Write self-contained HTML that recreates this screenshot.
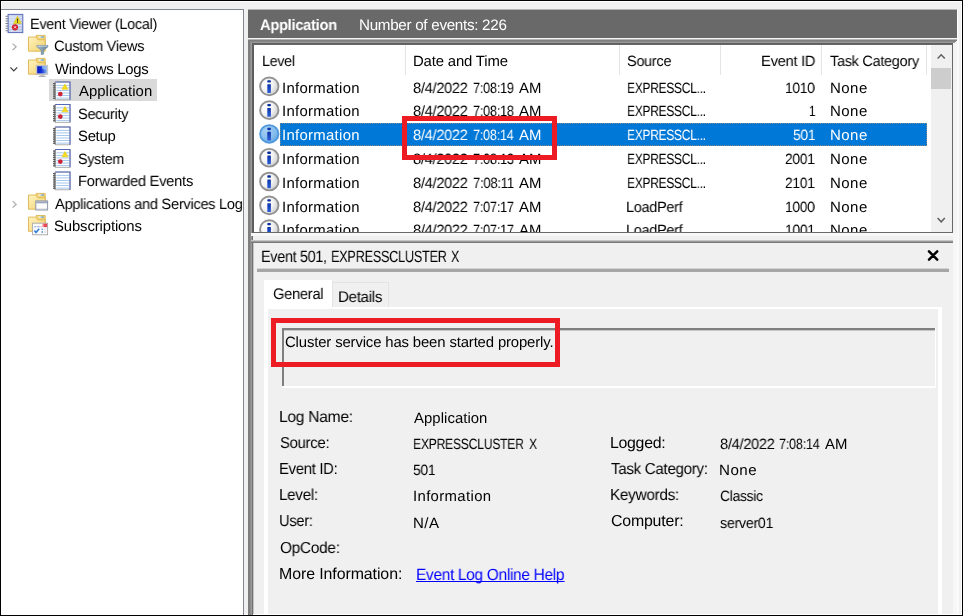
<!DOCTYPE html>
<html lang="en">
<head>
<meta charset="utf-8">
<title>Event Viewer</title>
<style>
html,body{margin:0;padding:0;}
body{width:963px;height:616px;overflow:hidden;background:#f0f0f0;position:relative;
 font-family:"Liberation Sans",sans-serif;font-size:14.5px;color:#000;}
.a{position:absolute;}
.t{will-change:transform;text-rendering:geometricPrecision;position:absolute;white-space:pre;line-height:20px;height:20px;font-size:14.9px;transform-origin:0 50%;}
.clip{position:absolute;left:0;top:0;width:963px;height:616px;}
svg{position:absolute;overflow:visible;}
</style>
</head>
<body>
<!-- ===== left tree pane ===== -->
<div class="a" style="left:1px;top:9px;width:243px;height:606px;background:#fff;"></div>
<div class="a" style="left:1px;top:9px;width:243px;height:1px;background:#828790;"></div>
<div class="a" style="left:243px;top:9px;width:1px;height:606px;background:#828790;"></div>
<!-- selected node -->
<div class="a" style="left:49px;top:79px;width:108px;height:22px;background:#d9d9d9;"></div>
<div class="clip" style="clip-path:inset(10px 720px 1px 1px);">
<svg width="0" height="0" style="position:absolute"><defs>
<linearGradient id="gFold" x1="0" y1="0" x2="1" y2="1"><stop offset="0" stop-color="#fff3bf"/><stop offset="1" stop-color="#f2d270"/></linearGradient>
<linearGradient id="gTab" x1="0" y1="0" x2="0" y2="1"><stop offset="0" stop-color="#f7dc86"/><stop offset="1" stop-color="#e9c25a"/></linearGradient>
<linearGradient id="gLbl" x1="0" y1="0" x2="1" y2="0"><stop offset="0" stop-color="#ffffff"/><stop offset="1" stop-color="#3c8cd8"/></linearGradient>
<linearGradient id="gScr" x1="0" y1="0" x2="1" y2="0"><stop offset="0" stop-color="#0418c4"/><stop offset="0.45" stop-color="#1434d8"/><stop offset="1" stop-color="#86b4f0"/></linearGradient>
<linearGradient id="gFun" x1="0" y1="0" x2="1" y2="0"><stop offset="0" stop-color="#a9bccb"/><stop offset="1" stop-color="#5f7f99"/></linearGradient>
<radialGradient id="gInfo" cx="0.28" cy="0.35" r="0.85"><stop offset="0" stop-color="#ffffff"/><stop offset="0.5" stop-color="#f2f2f2"/><stop offset="1" stop-color="#c2c2c2"/></radialGradient>
<radialGradient id="gInfoS" cx="0.35" cy="0.3" r="0.8"><stop offset="0" stop-color="#a8d0f4"/><stop offset="0.6" stop-color="#84bcee"/><stop offset="1" stop-color="#5ea2e2"/></radialGradient>
<linearGradient id="gI" x1="0" y1="0" x2="0" y2="1"><stop offset="0" stop-color="#0c35a8"/><stop offset="1" stop-color="#2f5fd8"/></linearGradient>
<linearGradient id="gBook" x1="0" y1="0" x2="1" y2="1"><stop offset="0" stop-color="#d4def4"/><stop offset="1" stop-color="#a9bbe2"/></linearGradient>
</defs></svg>
<svg class="a" style="left:5px;top:14px;" width="20" height="20" viewBox="0 0 20 20" ><rect x="3.1" y="0.4" width="14.7" height="18.2" fill="url(#gBook)" stroke="#5b6cb6" stroke-width="1"/><rect x="4.4" y="2.60" width="12.4" height="1.2" fill="#e2eaf8" opacity="0.9"/><rect x="4.4" y="5.35" width="12.4" height="1.2" fill="#e2eaf8" opacity="0.9"/><rect x="4.4" y="8.10" width="12.4" height="1.2" fill="#e2eaf8" opacity="0.9"/><rect x="4.4" y="10.85" width="12.4" height="1.2" fill="#e2eaf8" opacity="0.9"/><rect x="4.4" y="13.60" width="12.4" height="1.2" fill="#e2eaf8" opacity="0.9"/><rect x="4.4" y="16.35" width="12.4" height="1.2" fill="#e2eaf8" opacity="0.9"/><rect x="0.4" y="1.80" width="3" height="1" rx="0.5" fill="#7a7f8c"/><rect x="0.4" y="4.20" width="3" height="1" rx="0.5" fill="#7a7f8c"/><rect x="0.4" y="6.60" width="3" height="1" rx="0.5" fill="#7a7f8c"/><rect x="0.4" y="9.00" width="3" height="1" rx="0.5" fill="#7a7f8c"/><rect x="0.4" y="11.40" width="3" height="1" rx="0.5" fill="#7a7f8c"/><rect x="0.4" y="13.80" width="3" height="1" rx="0.5" fill="#7a7f8c"/><rect x="0.4" y="16.20" width="3" height="1" rx="0.5" fill="#7a7f8c"/><path d="M12.5 2.2 L16.2 9.5 H8.6 Z" fill="#ecd51c" stroke="#d9c214" stroke-width="0.6" stroke-linejoin="round"/><rect x="12.05" y="4.6" width="0.9" height="3" fill="#222"/><rect x="12.05" y="8" width="0.9" height="0.8" fill="#222"/><circle cx="10" cy="13.3" r="3.1" fill="#d2202e"/><path d="M8.9 12.2 L11.1 14.4 M11.1 12.2 L8.9 14.4" stroke="#ffe9ea" stroke-width="0.9"/></svg>
<svg class="a" style="left:28px;top:34px;" width="22" height="22" viewBox="0 0 22 22" ><g transform="translate(0.0,0.8)"><path d="M8.2 0.6 H17.2 V12 H8.2 Z" fill="url(#gTab)" stroke="#d7b04a" stroke-width="0.8"/><rect x="11" y="1.5" width="4.6" height="1.5" fill="url(#gLbl)"/><path d="M0.5 2.2 H7.4 Q8.4 2.2 8.9 3.6 Q9.4 5 10.6 5 H17.2 V16.4 H0.5 Z" fill="url(#gFold)" stroke="#dcb650" stroke-width="0.9"/><path d="M8.8 10.6 H20 V12 L15.6 15.4 V19.4 L13.2 19.8 V15.4 L8.8 12 Z" fill="url(#gFun)" stroke="#6a869c" stroke-width="0.6"/><rect x="9.4" y="10.9" width="10" height="1" fill="#c5d3de"/></g></svg>
<svg class="a" style="left:28px;top:57px;" width="22" height="22" viewBox="0 0 22 22" ><g transform="translate(0.0,0.8)"><path d="M8.2 0.6 H17.2 V12 H8.2 Z" fill="url(#gTab)" stroke="#d7b04a" stroke-width="0.8"/><rect x="11" y="1.5" width="4.6" height="1.5" fill="url(#gLbl)"/><path d="M0.5 2.2 H7.4 Q8.4 2.2 8.9 3.6 Q9.4 5 10.6 5 H17.2 V16.4 H0.5 Z" fill="url(#gFold)" stroke="#dcb650" stroke-width="0.9"/><rect x="8.2" y="7.4" width="11.6" height="9.2" fill="#d6d6d6" stroke="#b4b4b4" stroke-width="0.6"/><rect x="9.2" y="8.4" width="9.6" height="7.2" fill="url(#gScr)"/><path d="M14 8.4 H18.8 V12 Q16 12.2 14 10.6 Z" fill="#9cc4f4" opacity="0.75"/><rect x="12.4" y="16.8" width="3.4" height="1.2" fill="#bdbdbd"/><rect x="10.6" y="18" width="7" height="1.1" fill="#a8a8a8"/></g></svg>
<svg class="a" style="left:53px;top:81px;" width="19" height="20" viewBox="0 0 19 20" ><g transform="translate(0.0,0.5)"><rect x="2.2" y="0.5" width="14.8" height="17.8" fill="#ffffff" stroke="#9a9a9a" stroke-width="0.8"/><path d="M2.2 0.5 H17 V18.3" fill="none" stroke="#5669b8" stroke-width="1.1"/><rect x="3.4" y="3.40" width="12.6" height="0.9" fill="#9cc2ea"/><rect x="3.4" y="5.95" width="12.6" height="0.9" fill="#9cc2ea"/><rect x="3.4" y="8.50" width="12.6" height="0.9" fill="#9cc2ea"/><rect x="3.4" y="11.05" width="12.6" height="0.9" fill="#9cc2ea"/><rect x="3.4" y="13.60" width="12.6" height="0.9" fill="#9cc2ea"/><rect x="3.4" y="16.15" width="12.6" height="0.9" fill="#9cc2ea"/><rect x="0.9" y="1.2" width="1.5" height="16.4" fill="#8a8a8a"/><rect x="0" y="1.50" width="2.5" height="1.2" fill="#5e5e5e"/><rect x="0" y="3.60" width="2.5" height="1.2" fill="#5e5e5e"/><rect x="0" y="5.70" width="2.5" height="1.2" fill="#5e5e5e"/><rect x="0" y="7.80" width="2.5" height="1.2" fill="#5e5e5e"/><rect x="0" y="9.90" width="2.5" height="1.2" fill="#5e5e5e"/><rect x="0" y="12.00" width="2.5" height="1.2" fill="#5e5e5e"/><rect x="0" y="14.10" width="2.5" height="1.2" fill="#5e5e5e"/><rect x="0" y="16.20" width="2.5" height="1.2" fill="#5e5e5e"/><path d="M12 2.6 L15 7.8 H9 Z" fill="#f4dc1c" stroke="#e6c81a" stroke-width="0.6" stroke-linejoin="round"/><circle cx="7.3" cy="12.6" r="2.35" fill="#cf2337"/></g></svg>
<svg class="a" style="left:53px;top:104px;" width="19" height="20" viewBox="0 0 19 20" ><rect x="2.2" y="0.5" width="14.8" height="17.8" fill="#ffffff" stroke="#9a9a9a" stroke-width="0.8"/><path d="M2.2 0.5 H17 V18.3" fill="none" stroke="#5669b8" stroke-width="1.1"/><rect x="3.4" y="3.40" width="12.6" height="0.9" fill="#9cc2ea"/><rect x="3.4" y="5.95" width="12.6" height="0.9" fill="#9cc2ea"/><rect x="3.4" y="8.50" width="12.6" height="0.9" fill="#9cc2ea"/><rect x="3.4" y="11.05" width="12.6" height="0.9" fill="#9cc2ea"/><rect x="3.4" y="13.60" width="12.6" height="0.9" fill="#9cc2ea"/><rect x="3.4" y="16.15" width="12.6" height="0.9" fill="#9cc2ea"/><rect x="0.9" y="1.2" width="1.5" height="16.4" fill="#8a8a8a"/><rect x="0" y="1.50" width="2.5" height="1.2" fill="#5e5e5e"/><rect x="0" y="3.60" width="2.5" height="1.2" fill="#5e5e5e"/><rect x="0" y="5.70" width="2.5" height="1.2" fill="#5e5e5e"/><rect x="0" y="7.80" width="2.5" height="1.2" fill="#5e5e5e"/><rect x="0" y="9.90" width="2.5" height="1.2" fill="#5e5e5e"/><rect x="0" y="12.00" width="2.5" height="1.2" fill="#5e5e5e"/><rect x="0" y="14.10" width="2.5" height="1.2" fill="#5e5e5e"/><rect x="0" y="16.20" width="2.5" height="1.2" fill="#5e5e5e"/><path d="M12 2.6 L15 7.8 H9 Z" fill="#f4dc1c" stroke="#e6c81a" stroke-width="0.6" stroke-linejoin="round"/><circle cx="7.3" cy="12.6" r="2.35" fill="#cf2337"/></svg>
<svg class="a" style="left:53px;top:126px;" width="19" height="20" viewBox="0 0 19 20" ><g transform="translate(0.0,0.5)"><rect x="2.2" y="0.5" width="14.8" height="17.8" fill="#ffffff" stroke="#9a9a9a" stroke-width="0.8"/><path d="M2.2 0.5 H17 V18.3" fill="none" stroke="#5669b8" stroke-width="1.1"/><rect x="3.4" y="3.40" width="12.6" height="0.9" fill="#9cc2ea"/><rect x="3.4" y="5.95" width="12.6" height="0.9" fill="#9cc2ea"/><rect x="3.4" y="8.50" width="12.6" height="0.9" fill="#9cc2ea"/><rect x="3.4" y="11.05" width="12.6" height="0.9" fill="#9cc2ea"/><rect x="3.4" y="13.60" width="12.6" height="0.9" fill="#9cc2ea"/><rect x="3.4" y="16.15" width="12.6" height="0.9" fill="#9cc2ea"/><rect x="0.9" y="1.2" width="1.5" height="16.4" fill="#8a8a8a"/><rect x="0" y="1.50" width="2.5" height="1.2" fill="#5e5e5e"/><rect x="0" y="3.60" width="2.5" height="1.2" fill="#5e5e5e"/><rect x="0" y="5.70" width="2.5" height="1.2" fill="#5e5e5e"/><rect x="0" y="7.80" width="2.5" height="1.2" fill="#5e5e5e"/><rect x="0" y="9.90" width="2.5" height="1.2" fill="#5e5e5e"/><rect x="0" y="12.00" width="2.5" height="1.2" fill="#5e5e5e"/><rect x="0" y="14.10" width="2.5" height="1.2" fill="#5e5e5e"/><rect x="0" y="16.20" width="2.5" height="1.2" fill="#5e5e5e"/></g></svg>
<svg class="a" style="left:53px;top:149px;" width="19" height="20" viewBox="0 0 19 20" ><rect x="2.2" y="0.5" width="14.8" height="17.8" fill="#ffffff" stroke="#9a9a9a" stroke-width="0.8"/><path d="M2.2 0.5 H17 V18.3" fill="none" stroke="#5669b8" stroke-width="1.1"/><rect x="3.4" y="3.40" width="12.6" height="0.9" fill="#9cc2ea"/><rect x="3.4" y="5.95" width="12.6" height="0.9" fill="#9cc2ea"/><rect x="3.4" y="8.50" width="12.6" height="0.9" fill="#9cc2ea"/><rect x="3.4" y="11.05" width="12.6" height="0.9" fill="#9cc2ea"/><rect x="3.4" y="13.60" width="12.6" height="0.9" fill="#9cc2ea"/><rect x="3.4" y="16.15" width="12.6" height="0.9" fill="#9cc2ea"/><rect x="0.9" y="1.2" width="1.5" height="16.4" fill="#8a8a8a"/><rect x="0" y="1.50" width="2.5" height="1.2" fill="#5e5e5e"/><rect x="0" y="3.60" width="2.5" height="1.2" fill="#5e5e5e"/><rect x="0" y="5.70" width="2.5" height="1.2" fill="#5e5e5e"/><rect x="0" y="7.80" width="2.5" height="1.2" fill="#5e5e5e"/><rect x="0" y="9.90" width="2.5" height="1.2" fill="#5e5e5e"/><rect x="0" y="12.00" width="2.5" height="1.2" fill="#5e5e5e"/><rect x="0" y="14.10" width="2.5" height="1.2" fill="#5e5e5e"/><rect x="0" y="16.20" width="2.5" height="1.2" fill="#5e5e5e"/><path d="M12 2.6 L15 7.8 H9 Z" fill="#f4dc1c" stroke="#e6c81a" stroke-width="0.6" stroke-linejoin="round"/><circle cx="7.3" cy="12.6" r="2.35" fill="#cf2337"/></svg>
<svg class="a" style="left:53px;top:171px;" width="19" height="20" viewBox="0 0 19 20" ><g transform="translate(0.0,0.5)"><rect x="2.2" y="0.5" width="14.8" height="17.8" fill="#ffffff" stroke="#9a9a9a" stroke-width="0.8"/><path d="M2.2 0.5 H17 V18.3" fill="none" stroke="#5669b8" stroke-width="1.1"/><rect x="3.4" y="3.40" width="12.6" height="0.9" fill="#9cc2ea"/><rect x="3.4" y="5.95" width="12.6" height="0.9" fill="#9cc2ea"/><rect x="3.4" y="8.50" width="12.6" height="0.9" fill="#9cc2ea"/><rect x="3.4" y="11.05" width="12.6" height="0.9" fill="#9cc2ea"/><rect x="3.4" y="13.60" width="12.6" height="0.9" fill="#9cc2ea"/><rect x="3.4" y="16.15" width="12.6" height="0.9" fill="#9cc2ea"/><rect x="0.9" y="1.2" width="1.5" height="16.4" fill="#8a8a8a"/><rect x="0" y="1.50" width="2.5" height="1.2" fill="#5e5e5e"/><rect x="0" y="3.60" width="2.5" height="1.2" fill="#5e5e5e"/><rect x="0" y="5.70" width="2.5" height="1.2" fill="#5e5e5e"/><rect x="0" y="7.80" width="2.5" height="1.2" fill="#5e5e5e"/><rect x="0" y="9.90" width="2.5" height="1.2" fill="#5e5e5e"/><rect x="0" y="12.00" width="2.5" height="1.2" fill="#5e5e5e"/><rect x="0" y="14.10" width="2.5" height="1.2" fill="#5e5e5e"/><rect x="0" y="16.20" width="2.5" height="1.2" fill="#5e5e5e"/></g></svg>
<svg class="a" style="left:28px;top:192px;" width="22" height="22" viewBox="0 0 22 22" ><g transform="translate(0.0,0.8)"><path d="M8.2 0.6 H17.2 V12 H8.2 Z" fill="url(#gTab)" stroke="#d7b04a" stroke-width="0.8"/><rect x="11" y="1.5" width="4.6" height="1.5" fill="url(#gLbl)"/><path d="M0.5 2.2 H7.4 Q8.4 2.2 8.9 3.6 Q9.4 5 10.6 5 H17.2 V16.4 H0.5 Z" fill="url(#gFold)" stroke="#dcb650" stroke-width="0.9"/><rect x="7.8" y="8.1" width="11.8" height="9.1" fill="#fbfbfb" stroke="#8c94a8" stroke-width="1"/><rect x="8.3" y="8.6" width="10.8" height="1.9" fill="#9aa4ba"/><rect x="8.3" y="15.9" width="10.8" height="0.9" fill="#b5bccb"/></g></svg>
<svg class="a" style="left:28px;top:214px;" width="22" height="22" viewBox="0 0 22 22" ><g transform="translate(0.0,0.9)"><path d="M8.2 0.6 H17.2 V12 H8.2 Z" fill="url(#gTab)" stroke="#d7b04a" stroke-width="0.8"/><rect x="11" y="1.5" width="4.6" height="1.5" fill="url(#gLbl)"/><path d="M0.5 2.2 H7.4 Q8.4 2.2 8.9 3.6 Q9.4 5 10.6 5 H17.2 V16.4 H0.5 Z" fill="url(#gFold)" stroke="#dcb650" stroke-width="0.9"/><rect x="4.6" y="8.3" width="15" height="11.6" fill="#fdfdfd" stroke="#a6a6a6" stroke-width="0.9"/><rect x="15.2" y="8.8" width="3.9" height="3.4" fill="#ea4555"/><rect x="14.2" y="8.8" width="1.2" height="3.4" fill="#f4a3ab"/><rect x="6.2" y="11.3" width="2.2" height="1.1" fill="#7fb0e6"/><rect x="9.2" y="11.3" width="2.4" height="1.1" fill="#9aa8d8"/><rect x="12.2" y="11.3" width="1.4" height="1.1" fill="#c9b4d4"/><path d="M6.4 15.6 L8 17.6 L11.2 13.8" fill="none" stroke="#2d7fd6" stroke-width="1.5"/><rect x="13.6" y="13.6" width="1.2" height="1.4" fill="#3a7fd8"/><rect x="13.6" y="16.2" width="1.2" height="1.8" fill="#3a7fd8"/><rect x="16.4" y="13.6" width="1.2" height="1.4" fill="#c9cfe0"/><rect x="16.4" y="16.2" width="1.2" height="1.8" fill="#c9cfe0"/></g></svg>
<svg class="a" style="left:10px;top:41px;" width="9" height="11" viewBox="0 0 9 11" ><g transform="translate(0.4,0.8)"><path d="M2.2 1.8 L5.8 5 L2.2 8.2" fill="none" stroke="#a6a6a6" stroke-width="1.1"/></g></svg>
<svg class="a" style="left:8px;top:65px;" width="11" height="9" viewBox="0 0 11 9" ><g transform="translate(0.8,0.2)"><path d="M1.6 2.2 L5 5.7 L8.4 2.2" fill="none" stroke="#404040" stroke-width="1.25"/></g></svg>
<svg class="a" style="left:10px;top:199px;" width="9" height="11" viewBox="0 0 9 11" ><g transform="translate(0.4,0.4)"><path d="M2.2 1.8 L5.8 5 L2.2 8.2" fill="none" stroke="#a6a6a6" stroke-width="1.1"/></g></svg>
<span class="t" style="left:30.47px;top:15px;letter-spacing:-0.300px;transform:scaleX(0.9686);">Event Viewer (Local)</span>
<span class="t" style="left:54.21px;top:37px;letter-spacing:-0.300px;transform:scaleX(0.9869);">Custom Views</span>
<span class="t" style="left:54.90px;top:60px;letter-spacing:-0.284px;">Windows Logs</span>
<span class="t" style="left:78.90px;top:82px;letter-spacing:0.034px;">Application</span>
<span class="t" style="left:78.45px;top:105px;letter-spacing:-0.300px;transform:scaleX(0.9755);">Security</span>
<span class="t" style="left:78.44px;top:127px;letter-spacing:-0.300px;transform:scaleX(0.9954);">Setup</span>
<span class="t" style="left:78.45px;top:150px;letter-spacing:-0.300px;transform:scaleX(0.9608);">System</span>
<span class="t" style="left:77.75px;top:172px;letter-spacing:-0.300px;transform:scaleX(0.9906);">Forwarded Events</span>
<span class="t" style="left:54.90px;top:195px;letter-spacing:-0.300px;transform:scaleX(0.9833);">Applications and Services Logs</span>
<span class="t" style="left:54.43px;top:217px;letter-spacing:-0.126px;">Subscriptions</span>
</div>

<!-- ===== right: header band ===== -->
<div class="a" style="left:248px;top:9px;width:709px;height:1px;background:#b4b4b4;"></div>
<div class="a" style="left:248px;top:10px;width:709px;height:28px;background:#696969;"></div>
<div class="a" style="left:957px;top:10px;width:1px;height:28px;background:#fff;"></div>

<!-- vertical gray strip left of list/detail -->
<div class="a" style="left:248px;top:40px;width:2px;height:575px;background:#7e7e7e;"></div>
<div class="a" style="left:250px;top:40px;width:1px;height:575px;background:#8c8c8c;"></div>
<div class="a" style="left:251px;top:41px;width:1px;height:574px;background:#9c9c9c;"></div>
<div class="a" style="left:252px;top:42px;width:1px;height:573px;background:#707070;"></div>
<div class="a" style="left:253px;top:243px;width:1px;height:372px;background:#c4c4c4;"></div>
<!-- list frame -->
<div class="a" style="left:248px;top:38px;width:709px;height:1px;background:#f6f6f6;"></div>
<div class="a" style="left:248px;top:39px;width:709px;height:1px;background:#b4b4b4;"></div>
<div class="a" style="left:248px;top:40px;width:709px;height:1px;background:#7e7e7e;"></div>
<div class="a" style="left:250px;top:41px;width:706px;height:1px;background:#868686;"></div>
<div class="a" style="left:251px;top:42px;width:704px;height:1px;background:#989898;"></div>
<div class="a" style="left:252px;top:43px;width:701px;height:190px;background:#5e5e5e;"></div>
<div class="a" style="left:253px;top:44px;width:700px;height:1px;background:#686868;"></div>
<div class="a" style="left:953px;top:43px;width:4px;height:190px;background:#f4f4f4;"></div>
<div class="a" style="left:952px;top:44px;width:1px;height:189px;background:#696969;"></div>
<div class="a" style="left:254px;top:232px;width:699px;height:1px;background:#696969;"></div>
<div class="a" style="left:254px;top:45px;width:698px;height:187px;background:#fff;"></div>
<!-- list column separators -->
<div class="a" style="left:405px;top:45px;width:1px;height:30px;background:#e5e5e5;"></div>
<div class="a" style="left:619px;top:45px;width:1px;height:30px;background:#e5e5e5;"></div>
<div class="a" style="left:720px;top:45px;width:1px;height:30px;background:#e5e5e5;"></div>
<div class="a" style="left:821px;top:45px;width:1px;height:30px;background:#e5e5e5;"></div>
<div class="a" style="left:926px;top:45px;width:1px;height:30px;background:#e5e5e5;"></div>
<!-- selected row -->
<div class="a" style="left:279.5px;top:123px;width:647.5px;height:23px;background:#0078d7;box-sizing:border-box;border:1px dotted rgba(230,150,70,0.55);"></div>
<!-- scrollbar -->
<div class="a" style="left:931px;top:45px;width:21px;height:187px;background:#f0f0f0;"></div>
<div class="a" style="left:931px;top:68px;width:20px;height:21px;background:#cdcdcd;"></div>
<svg class="a" style="left:936px;top:52px;" width="11" height="9" viewBox="0 0 11 9" ><g transform="translate(0.2,0.5)"><path d="M1.4 6 L5 2.3 L8.6 6" fill="none" stroke="#606060" stroke-width="1.5"/></g></svg><svg class="a" style="left:936px;top:216px;" width="11" height="9" viewBox="0 0 11 9" ><g transform="translate(0.2,0.1)"><path d="M1.4 2 L5 5.7 L8.6 2" fill="none" stroke="#606060" stroke-width="1.5"/></g></svg>
<div class="clip" style="clip-path:inset(45px 32px 384px 254px);">
<svg class="a" style="left:259px;top:76px;" width="21" height="21" viewBox="0 0 21 21" ><g transform="translate(0.3,0.35)"><ellipse cx="10" cy="10" rx="9.2" ry="8.85" fill="url(#gInfo)" stroke="#929292" stroke-width="1.9"/><rect x="8.0" y="7.85" width="3.6" height="8.75" rx="0.5" fill="url(#gI)"/><rect x="8.0" y="3.8" width="3.6" height="2.4" rx="0.8" fill="#0a2f9c"/></g></svg>
<svg class="a" style="left:259px;top:100px;" width="21" height="21" viewBox="0 0 21 21" ><g transform="translate(0.3,0.15)"><ellipse cx="10" cy="10" rx="9.2" ry="8.85" fill="url(#gInfo)" stroke="#929292" stroke-width="1.9"/><rect x="8.0" y="7.85" width="3.6" height="8.75" rx="0.5" fill="url(#gI)"/><rect x="8.0" y="3.8" width="3.6" height="2.4" rx="0.8" fill="#0a2f9c"/></g></svg>
<svg class="a" style="left:259px;top:123px;" width="21" height="21" viewBox="0 0 21 21" ><g transform="translate(0.3,0.95)"><ellipse cx="10" cy="10" rx="9.2" ry="8.85" fill="url(#gInfoS)" stroke="#4f98dc" stroke-width="1.8"/><rect x="8.0" y="7.85" width="3.6" height="8.75" rx="0.5" fill="url(#gI)"/><rect x="8.0" y="3.8" width="3.6" height="2.4" rx="0.8" fill="#0c3aa8"/></g></svg>
<svg class="a" style="left:259px;top:147px;" width="21" height="21" viewBox="0 0 21 21" ><g transform="translate(0.3,0.75)"><ellipse cx="10" cy="10" rx="9.2" ry="8.85" fill="url(#gInfo)" stroke="#929292" stroke-width="1.9"/><rect x="8.0" y="7.85" width="3.6" height="8.75" rx="0.5" fill="url(#gI)"/><rect x="8.0" y="3.8" width="3.6" height="2.4" rx="0.8" fill="#0a2f9c"/></g></svg>
<svg class="a" style="left:259px;top:171px;" width="21" height="21" viewBox="0 0 21 21" ><g transform="translate(0.3,0.55)"><ellipse cx="10" cy="10" rx="9.2" ry="8.85" fill="url(#gInfo)" stroke="#929292" stroke-width="1.9"/><rect x="8.0" y="7.85" width="3.6" height="8.75" rx="0.5" fill="url(#gI)"/><rect x="8.0" y="3.8" width="3.6" height="2.4" rx="0.8" fill="#0a2f9c"/></g></svg>
<svg class="a" style="left:259px;top:195px;" width="21" height="21" viewBox="0 0 21 21" ><g transform="translate(0.3,0.35)"><ellipse cx="10" cy="10" rx="9.2" ry="8.85" fill="url(#gInfo)" stroke="#929292" stroke-width="1.9"/><rect x="8.0" y="7.85" width="3.6" height="8.75" rx="0.5" fill="url(#gI)"/><rect x="8.0" y="3.8" width="3.6" height="2.4" rx="0.8" fill="#0a2f9c"/></g></svg>
<svg class="a" style="left:259px;top:219px;" width="21" height="21" viewBox="0 0 21 21" ><g transform="translate(0.3,0.15)"><ellipse cx="10" cy="10" rx="9.2" ry="8.85" fill="url(#gInfo)" stroke="#929292" stroke-width="1.9"/><rect x="8.0" y="7.85" width="3.6" height="8.75" rx="0.5" fill="url(#gI)"/><rect x="8.0" y="3.8" width="3.6" height="2.4" rx="0.8" fill="#0a2f9c"/></g></svg>
<span class="t" style="left:282.14px;top:79px;letter-spacing:0.306px;">Information</span>
<span class="t" style="left:413.44px;top:79px;letter-spacing:-0.300px;transform:scaleX(0.9849);">8/4/2022</span>
<span class="t" style="left:473.10px;top:79px;letter-spacing:-0.300px;transform:scaleX(0.8582);">7:08:19</span>
<span class="t" style="left:518.80px;top:79px;letter-spacing:-0.046px;">AM</span>
<span class="t" style="left:626.57px;top:79px;letter-spacing:-0.300px;transform:scaleX(0.8027);">EXPRESSCL...</span>
<span class="t" style="left:785.24px;top:79px;letter-spacing:-0.300px;transform:scaleX(0.9242);">1010</span>
<span class="t" style="left:829.53px;top:79px;letter-spacing:0.450px;transform:scaleX(1.0085);">None</span>
<span class="t" style="left:282.14px;top:102px;letter-spacing:0.306px;">Information</span>
<span class="t" style="left:413.44px;top:102px;letter-spacing:-0.300px;transform:scaleX(0.9849);">8/4/2022</span>
<span class="t" style="left:473.10px;top:102px;letter-spacing:-0.300px;transform:scaleX(0.8582);">7:08:18</span>
<span class="t" style="left:518.80px;top:102px;letter-spacing:-0.046px;">AM</span>
<span class="t" style="left:626.57px;top:102px;letter-spacing:-0.300px;transform:scaleX(0.8027);">EXPRESSCL...</span>
<span class="t" style="left:808.56px;top:102px;letter-spacing:0.000px;transform:scaleX(0.7998);">1</span>
<span class="t" style="left:829.53px;top:102px;letter-spacing:0.450px;transform:scaleX(1.0085);">None</span>
<span class="t" style="left:282.14px;top:126px;letter-spacing:0.306px;color:#fff;">Information</span>
<span class="t" style="left:413.44px;top:126px;letter-spacing:-0.300px;transform:scaleX(0.9849);color:#fff;">8/4/2022</span>
<span class="t" style="left:473.10px;top:126px;letter-spacing:-0.300px;transform:scaleX(0.8539);color:#fff;">7:08:14</span>
<span class="t" style="left:518.80px;top:126px;letter-spacing:-0.046px;color:#fff;">AM</span>
<span class="t" style="left:626.57px;top:126px;letter-spacing:-0.300px;transform:scaleX(0.8027);color:#fff;">EXPRESSCL...</span>
<span class="t" style="left:792.67px;top:126px;letter-spacing:-0.300px;transform:scaleX(0.9314);color:#fff;">501</span>
<span class="t" style="left:829.53px;top:126px;letter-spacing:0.450px;transform:scaleX(1.0085);color:#fff;">None</span>
<span class="t" style="left:282.14px;top:150px;letter-spacing:0.306px;">Information</span>
<span class="t" style="left:413.44px;top:150px;letter-spacing:-0.300px;transform:scaleX(0.9849);">8/4/2022</span>
<span class="t" style="left:473.10px;top:150px;letter-spacing:-0.300px;transform:scaleX(0.8582);">7:08:13</span>
<span class="t" style="left:518.80px;top:150px;letter-spacing:-0.046px;">AM</span>
<span class="t" style="left:626.57px;top:150px;letter-spacing:-0.300px;transform:scaleX(0.8027);">EXPRESSCL...</span>
<span class="t" style="left:785.45px;top:150px;letter-spacing:-0.300px;transform:scaleX(0.9242);">2001</span>
<span class="t" style="left:829.53px;top:150px;letter-spacing:0.450px;transform:scaleX(1.0085);">None</span>
<span class="t" style="left:282.14px;top:174px;letter-spacing:0.306px;">Information</span>
<span class="t" style="left:413.44px;top:174px;letter-spacing:-0.300px;transform:scaleX(0.9849);">8/4/2022</span>
<span class="t" style="left:473.09px;top:174px;letter-spacing:-0.300px;transform:scaleX(0.8790);">7:08:11</span>
<span class="t" style="left:518.80px;top:174px;letter-spacing:-0.046px;">AM</span>
<span class="t" style="left:626.57px;top:174px;letter-spacing:-0.300px;transform:scaleX(0.8027);">EXPRESSCL...</span>
<span class="t" style="left:785.45px;top:174px;letter-spacing:-0.300px;transform:scaleX(0.9242);">2101</span>
<span class="t" style="left:829.53px;top:174px;letter-spacing:0.450px;transform:scaleX(1.0085);">None</span>
<span class="t" style="left:282.14px;top:198px;letter-spacing:0.306px;">Information</span>
<span class="t" style="left:413.44px;top:198px;letter-spacing:-0.300px;transform:scaleX(0.9849);">8/4/2022</span>
<span class="t" style="left:473.10px;top:198px;letter-spacing:-0.300px;transform:scaleX(0.8582);">7:07:17</span>
<span class="t" style="left:518.80px;top:198px;letter-spacing:-0.046px;">AM</span>
<span class="t" style="left:626.37px;top:198px;letter-spacing:-0.300px;transform:scaleX(0.9710);">LoadPerf</span>
<span class="t" style="left:785.24px;top:198px;letter-spacing:-0.300px;transform:scaleX(0.9242);">1000</span>
<span class="t" style="left:829.53px;top:198px;letter-spacing:0.450px;transform:scaleX(1.0085);">None</span>
<span class="t" style="left:282.14px;top:221px;letter-spacing:0.306px;">Information</span>
<span class="t" style="left:413.44px;top:221px;letter-spacing:-0.300px;transform:scaleX(0.9849);">8/4/2022</span>
<span class="t" style="left:473.10px;top:221px;letter-spacing:-0.300px;transform:scaleX(0.8582);">7:07:17</span>
<span class="t" style="left:518.80px;top:221px;letter-spacing:-0.046px;">AM</span>
<span class="t" style="left:626.37px;top:221px;letter-spacing:-0.300px;transform:scaleX(0.9710);">LoadPerf</span>
<span class="t" style="left:785.23px;top:221px;letter-spacing:-0.300px;transform:scaleX(0.9312);">1001</span>
<span class="t" style="left:829.53px;top:221px;letter-spacing:0.450px;transform:scaleX(1.0085);">None</span>
</div>

<!-- ===== detail panel ===== -->
<div class="a" style="left:251px;top:240px;width:704px;height:1px;background:#c4c4c4;"></div>
<div class="a" style="left:251px;top:241px;width:703px;height:1px;background:#9a9a9a;"></div>
<div class="a" style="left:251px;top:242px;width:702px;height:1px;background:#787878;"></div>
<div class="a" style="left:953px;top:233px;width:4px;height:381px;background:#f7f7f7;"></div>
<div class="a" style="left:957px;top:38px;width:2px;height:576px;background:#fbfbfb;"></div>
<div class="a" style="left:251px;top:233px;width:706px;height:3px;background:#f8f8f8;"></div>
<div class="a" style="left:257px;top:268px;width:692px;height:1px;background:#d4d4d4;"></div>
<div class="a" style="left:257px;top:269px;width:692px;height:3px;background:#a6a6a6;"></div>
<!-- tab page -->
<div class="a" style="left:264px;top:307px;width:678px;height:308px;background:#fff;"></div>
<div class="a" style="left:268px;top:309px;width:670px;height:306px;background:#f0f0f0;"></div>
<!-- tabs -->
<div class="a" style="left:332px;top:282px;width:57px;height:25px;background:#e3e3e3;"></div>
<div class="a" style="left:333px;top:283px;width:55px;height:24px;background:#f0f0f0;"></div>
<div class="a" style="left:264px;top:280px;width:68px;height:29px;background:#fff;"></div>
<!-- message box -->
<div class="a" style="left:282px;top:328px;width:654px;height:60px;background:#fff;"></div>
<div class="a" style="left:282px;top:328px;width:653px;height:58px;background:#808080;"></div>
<div class="a" style="left:284px;top:330px;width:651px;height:56px;background:#f0f0f0;"></div>
<div class="a" style="left:284px;top:330px;width:651px;height:1px;background:#c6c6c6;"></div>
<svg class="a" style="left:927px;top:249px;" width="13" height="13" viewBox="0 0 13 13" ><g transform="translate(0.1,0.5)"><path d="M1.9 1.9 L10.1 10.1 M10.1 1.9 L1.9 10.1" stroke="#000" stroke-width="2.5" stroke-linecap="round"/></g></svg>
<span class="t" style="left:259.87px;top:16px;letter-spacing:-0.300px;transform:scaleX(0.9672);font-size:15.2px;color:#fff;font-weight:700;">Application</span>
<span class="t" style="left:358.91px;top:16px;letter-spacing:-0.289px;font-size:15.2px;color:#fff;">Number of events: 226</span>
<span class="t" style="left:261.68px;top:52px;letter-spacing:-0.300px;transform:scaleX(0.9605);">Level</span>
<span class="t" style="left:412.84px;top:52px;letter-spacing:-0.159px;">Date and Time</span>
<span class="t" style="left:627.05px;top:52px;letter-spacing:-0.300px;transform:scaleX(0.9722);">Source</span>
<span class="t" style="left:760.75px;top:52px;letter-spacing:-0.300px;transform:scaleX(0.9895);">Event ID</span>
<span class="t" style="left:830.47px;top:52px;letter-spacing:-0.300px;transform:scaleX(0.9726);">Task Category</span>
<span class="t" style="left:260.68px;top:247px;letter-spacing:-0.300px;transform:scaleX(0.8798);font-size:16.3px;">Event 501,</span>
<span class="t" style="left:330.91px;top:247px;letter-spacing:-0.300px;transform:scaleX(0.7778);font-size:16.3px;">EXPRESSCLUSTER</span>
<span class="t" style="left:451.30px;top:247px;letter-spacing:0.000px;transform:scaleX(0.7661);font-size:16.3px;">X</span>
<span class="t" style="left:272.91px;top:285px;letter-spacing:-0.300px;transform:scaleX(0.9509);font-size:15.45px;">General</span>
<span class="t" style="left:337.72px;top:288px;letter-spacing:-0.300px;transform:scaleX(0.9786);font-size:15.45px;">Details</span>
<span class="t" style="left:285.40px;top:333px;letter-spacing:-0.145px;">Cluster service has been started properly.</span>
<span class="t" style="left:279.08px;top:408px;letter-spacing:-0.300px;transform:scaleX(0.9821);font-size:15.9px;">Log Name:</span>
<span class="t" style="left:279.83px;top:434px;letter-spacing:-0.300px;transform:scaleX(0.9361);font-size:15.9px;">Source:</span>
<span class="t" style="left:279.14px;top:460px;letter-spacing:-0.300px;transform:scaleX(0.9334);font-size:15.9px;">Event ID:</span>
<span class="t" style="left:279.11px;top:486px;letter-spacing:-0.300px;transform:scaleX(0.9569);font-size:15.9px;">Level:</span>
<span class="t" style="left:279.38px;top:512px;letter-spacing:-0.300px;transform:scaleX(0.9256);font-size:15.9px;">User:</span>
<span class="t" style="left:279.58px;top:539px;letter-spacing:-0.300px;transform:scaleX(0.9705);font-size:15.9px;">OpCode:</span>
<span class="t" style="left:279.06px;top:565px;letter-spacing:-0.076px;font-size:15.9px;">More Information:</span>
<span class="t" style="left:413.90px;top:409px;letter-spacing:0.054px;">Application</span>
<span class="t" style="left:412.85px;top:435px;letter-spacing:-0.300px;transform:scaleX(0.8158);">EXPRESSCLUSTER</span>
<span class="t" style="left:528.71px;top:435px;letter-spacing:0.000px;transform:scaleX(0.8172);">X</span>
<span class="t" style="left:413.47px;top:461px;letter-spacing:-0.300px;transform:scaleX(0.9314);">501</span>
<span class="t" style="left:412.74px;top:487px;letter-spacing:0.356px;">Information</span>
<span class="t" style="left:412.72px;top:514px;letter-spacing:0.450px;transform:scaleX(1.0103);">N/A</span>
<span class="t" style="left:415.89px;top:565px;letter-spacing:-0.300px;transform:scaleX(0.9467);font-size:16.3px;color:#0000ff;text-decoration:underline;text-decoration-thickness:1.4px;text-underline-offset:0.6px;text-decoration-skip-ink:none;">Event Log Online Help</span>
<span class="t" style="left:610.36px;top:434px;letter-spacing:-0.300px;transform:scaleX(0.9963);font-size:15.9px;">Logged:</span>
<span class="t" style="left:611.36px;top:460px;letter-spacing:-0.300px;transform:scaleX(0.9496);font-size:15.9px;">Task Category:</span>
<span class="t" style="left:610.40px;top:486px;letter-spacing:-0.300px;transform:scaleX(0.9646);font-size:15.9px;">Keywords:</span>
<span class="t" style="left:610.85px;top:512px;letter-spacing:-0.193px;font-size:15.9px;">Computer:</span>
<span class="t" style="left:719.74px;top:435px;letter-spacing:-0.300px;transform:scaleX(0.9849);">8/4/2022</span>
<span class="t" style="left:779.40px;top:435px;letter-spacing:-0.300px;transform:scaleX(0.8539);">7:08:14</span>
<span class="t" style="left:825.10px;top:435px;letter-spacing:-0.046px;">AM</span>
<span class="t" style="left:719.02px;top:461px;letter-spacing:0.450px;transform:scaleX(1.0170);">None</span>
<span class="t" style="left:719.55px;top:487px;letter-spacing:-0.300px;transform:scaleX(0.9318);">Classic</span>
<span class="t" style="left:719.98px;top:514px;letter-spacing:-0.300px;transform:scaleX(0.9576);">server01</span>

<!-- red annotation rectangles -->
<div class="a" style="left:402px;top:116px;width:145px;height:34px;border:5px solid #ed1c24;"></div>
<div class="a" style="left:271px;top:318px;width:279px;height:38.5px;border:5px solid #ed1c24;"></div>

<!-- outer frame -->
<div class="a" style="left:244px;top:614px;width:4px;height:1px;background:#fff;"></div>
<div class="a" style="left:253px;top:614px;width:709px;height:1px;background:#fff;"></div>
<div class="a" style="left:1px;top:1px;width:1px;height:8px;background:#fff;"></div>
<div class="a" style="left:961px;top:1px;width:1px;height:614px;background:#fff;"></div>
<div class="a" style="left:1px;top:1px;width:961px;height:1px;background:#fff;"></div>
<div class="a" style="left:0;top:0;width:963px;height:1px;background:#000;"></div>
<div class="a" style="left:0;top:615px;width:963px;height:1px;background:#000;"></div>
<div class="a" style="left:0;top:0;width:1px;height:616px;background:#000;"></div>
<div class="a" style="left:962px;top:0;width:1px;height:616px;background:#000;"></div>
</body>
</html>
